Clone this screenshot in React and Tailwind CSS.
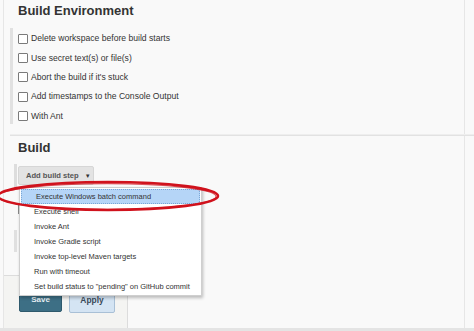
import React from "react";

const font = { fontFamily: '"Liberation Sans", Arial, sans-serif' };

function Check({ label }) {
  return (
    <div className="flex items-center h-[19.3px] gap-[3px]">
      <span className="w-[10px] h-[10px] border border-[#7a7a7a] rounded-[1px] bg-white shrink-0" />
      <span className="text-[8.6px] text-[#333] leading-none">{label}</span>
    </div>
  );
}

export default function App() {
  const items = [
    "Execute Windows batch command",
    "Execute shell",
    "Invoke Ant",
    "Invoke Gradle script",
    "Invoke top-level Maven targets",
    "Run with timeout",
    'Set build status to "pending" on GitHub commit',
  ];
  return (
    <div style={font} className="relative w-[474px] h-[331px] overflow-hidden bg-[#f9f9f9]">
      <div className="ml-[3px] w-[462px] h-[328px] border-l border-r border-[#e6e6e6] flex flex-col">
        <div className="pl-[14px] pt-[3px] h-[25px] text-[13px] font-bold text-[#333] leading-[16px]">
          Build Environment
        </div>
        <div className="ml-[6px] mt-[3px] border-l-[3px] border-[#e1e1e1] pl-[5px] pt-[1px] h-[96px]">
          <Check label="Delete workspace before build starts" />
          <Check label="Use secret text(s) or file(s)" />
          <Check label="Abort the build if it's stuck" />
          <Check label="Add timestamps to the Console Output" />
          <Check label="With Ant" />
        </div>
        <div className="ml-[6px] mt-[10px] mr-[-12px] h-[2px] border-t border-b border-t-[#eeeeee] border-b-[#e2e2e2]" />
        <div className="pl-[14px] pt-[4px] h-[26px] text-[13px] font-bold text-[#333] leading-[16px]">
          Build
        </div>
        <div className="ml-[10px] mt-[2px] border-l-[3px] border-[#dddddd] pl-[1px] pt-[2px] h-[24px]">
          <div className="w-[76px] h-[19px] bg-[#e3e3e3] border border-[#d6d6d6] rounded-[2px] flex items-center pl-[7px] gap-[6px]">
            <span className="text-[7.6px] font-bold text-[#555] leading-none">Add build step</span>
            <span className="text-[6px] text-[#333] leading-none">▼</span>
          </div>
        </div>
        <div className="ml-[14px] mt-[16px] w-[3px] h-[10px] bg-[#8a8a8a]" />
        <div className="ml-[10px] mt-[16px] w-[3px] h-[22px] bg-[#e0e0e0]" />
        <div className="mt-auto w-[124px] h-[53px] border-t border-r border-[#dcdcdc] bg-[#f4f4f2] flex items-start gap-[7px] pl-[15px] pt-[12px]">
          <div className="w-[43px] h-[24px] bg-[#3d6f85] border border-[#2f5a6d] rounded-[2px] flex items-center justify-center">
            <span className="text-[8px] font-bold text-[#e8f0f4]">Save</span>
          </div>
          <div className="w-[46px] h-[26px] mt-[-1px] bg-[#d4e4f3] border border-[#a9c0d6] rounded-[2px] flex items-center justify-center">
            <span className="text-[8.4px] font-bold text-[#3a4a5a]">Apply</span>
          </div>
        </div>
      </div>
      <div className="h-[3px] bg-[#e4e4e4]" />

      {/* dropdown menu */}
      <div className="absolute left-[19px] top-[187px] w-[183px] h-[109px] bg-white border border-[#cfcfcf] shadow-[1px_2px_3px_rgba(0,0,0,0.25)] pt-[1px]">
        {items.map((t, i) => (
          <div
            key={t}
            className={
              "h-[15px] flex items-center pl-[14px] text-[7.5px] text-[#333] leading-none " +
              (i === 0 ? "bg-[#b5d5f7] mx-[1px] border border-dotted border-[#7aa7d6] pl-[13px]" : "")
            }
          >
            {t}
          </div>
        ))}
      </div>

      {/* red ellipse annotation */}
      <svg className="absolute left-0 top-0 pointer-events-none" width="474" height="331">
        <ellipse cx="108" cy="196" rx="110" ry="14" fill="none" stroke="#d0121d" strokeWidth="2.6" />
        <ellipse cx="107" cy="196.5" rx="109" ry="12.8" fill="none" stroke="#d0121d" strokeWidth="1.2" opacity="0.7" />
      </svg>
    </div>
  );
}
